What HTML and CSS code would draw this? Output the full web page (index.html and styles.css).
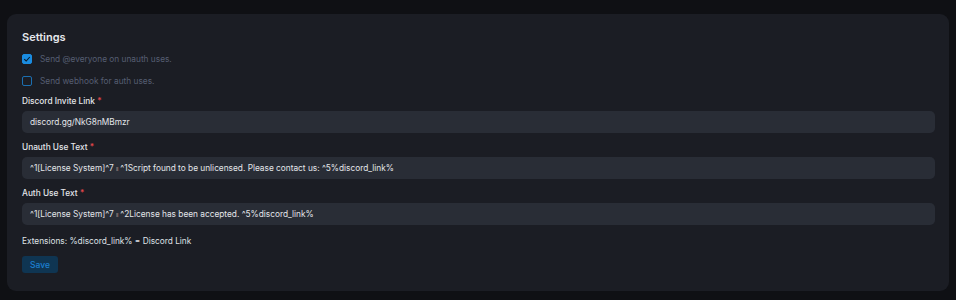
FILE: index.html
```html
<!DOCTYPE html>
<html>
<head>
<meta charset="utf-8">
<link rel="stylesheet" href="styles.css">
</head>
<body>
<div class="card">
  <h2 class="title">Settings</h2>
  <label class="check">
    <span class="box checked"><svg viewBox="0 0 10 10" width="8" height="8"><path d="M1.5 5.2 L4 7.5 L8.5 2.5" fill="none" stroke="#0b1a2a" stroke-width="1.4"/></svg></span>
    <span class="check-text">Send @everyone on unauth uses.</span>
  </label>
  <label class="check last">
    <span class="box"></span>
    <span class="check-text">Send webhook for auth uses.</span>
  </label>
  <div class="field">
    <div class="label">Discord Invite Link <span class="req">*</span></div>
    <div class="input">discord.gg/NkG8nMBmzr</div>
  </div>
  <div class="field">
    <div class="label">Unauth Use Text <span class="req">*</span></div>
    <div class="input">^1[License System]^7 <span class="sep">ıı</span> ^1Script found to be unlicensed. Please contact us: ^5%discord_link%</div>
  </div>
  <div class="field">
    <div class="label">Auth Use Text <span class="req">*</span></div>
    <div class="input">^1[License System]^7 <span class="sep">ıı</span> ^2License has been accepted. ^5%discord_link%</div>
  </div>
  <div class="ext">Extensions: %discord_link% = Discord Link</div>
  <button class="save">Save</button>
</div>
</body>
</html>
```
FILE: styles.css
```css
html, body {
  margin: 0;
  padding: 0;
  background: #0f1014;
  font-family: Inter, "Noto Sans", sans-serif;
}
body {
  padding: 14px 7px 9px 7px;
}
.card {
  background: #1b1d24;
  border-radius: 9px;
  padding: 15px 14px 18px 15px;
  display: flex;
  flex-direction: column;
}
.title {
  margin: 0 0 8px 0;
  font-size: 11px;
  font-weight: 600;
  color: #e6e8ec;
  line-height: 16px;
}
.check {
  display: flex;
  align-items: center;
  height: 12px;
  margin-bottom: 10px;
}
.check.last {
  margin-bottom: 8px;
}
.box {
  width: 8px;
  height: 8px;
  border: 1.5px solid #1b6fb0;
  border-radius: 2px;
  margin-right: 8px;
  display: flex;
  align-items: center;
  justify-content: center;
}
.box.checked {
  background: #1a8ce0;
  border-color: #1a8ce0;
}
.check-text {
  font-size: 8.3px;
  color: #565d72;
}
.field {
  display: flex;
  flex-direction: column;
}
.label {
  font-size: 8.3px;
  font-weight: 500;
  color: #e4e6ea;
  line-height: 12px;
  margin-bottom: 4px;
}
.req {
  color: #e5484d;
}
.input {
  background: #292d36;
  border-radius: 5px;
  height: 22px;
  padding: 0 8px;
  display: flex;
  align-items: center;
  font-size: 8.3px;
  color: #e4e6ea;
  margin-bottom: 8px;
  white-space: pre;
}
.sep {
  color: #b89a86;
  font-size: 6px;
  letter-spacing: -0.5px;
}
.ext {
  font-size: 8.3px;
  color: #dfe1e6;
  margin-top: 2px;
  line-height: 12px;
}
.save {
  align-self: flex-start;
  margin-top: 9px;
  background: #0f3552;
  color: #1c7fd0;
  border: none;
  border-radius: 3px;
  font-family: inherit;
  font-size: 8.5px;
  font-weight: 500;
  width: 36px;
  height: 17px;
  padding: 0;
}
```
